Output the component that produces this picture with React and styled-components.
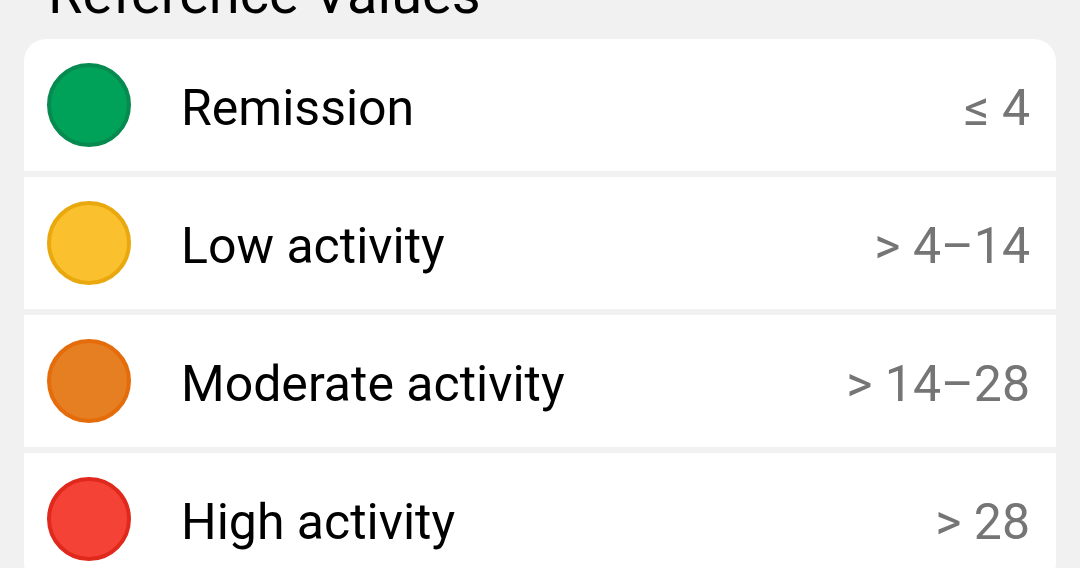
import React from 'react';
import styled, { createGlobalStyle } from 'styled-components';

const GlobalStyle = createGlobalStyle`
  body {
    margin: 0;
    background: #f1f1f1;
    font-family: Roboto, "Noto Sans", sans-serif;
  }
`;

const Page = styled.div`
  padding: 0 24px 24px;
`;

const Heading = styled.h2`
  margin: -34px 0 17px 24px;
  font-size: 56px;
  line-height: 56px;
  font-weight: 400;
  color: #000;
`;

const Card = styled.div`
  display: flex;
  flex-direction: column;
  gap: 6px;
  border-radius: 22px;
  overflow: hidden;
`;

const Row = styled.div`
  display: flex;
  align-items: center;
  height: 132px;
  padding: 0 26px 0 23px;
  background: #fff;
`;

const Dot = styled.span`
  flex: none;
  width: 84px;
  height: 84px;
  box-sizing: border-box;
  border-radius: 50%;
  background: ${(p) => p.$fill};
  border: 4px solid ${(p) => p.$ring};
`;

const Label = styled.span`
  flex: 1;
  margin-left: 50px;
  padding-top: 6px;
  font-size: 50px;
  color: #000;
`;

const Range = styled.span`
  padding-top: 6px;
  font-size: 50px;
  color: #757575;
`;

const levels = [
  { label: 'Remission', range: '≤ 4', fill: '#00a159', ring: '#078a4f' },
  { label: 'Low activity', range: '> 4–14', fill: '#fbc02d', ring: '#e9a90e' },
  { label: 'Moderate activity', range: '> 14–28', fill: '#e67e22', ring: '#e46c0a' },
  { label: 'High activity', range: '> 28', fill: '#f44336', ring: '#e0291c' },
];

export default function App() {
  return (
    <>
      <GlobalStyle />
      <Page>
        <Heading>Reference Values</Heading>
        <Card>
          {levels.map((l) => (
            <Row key={l.label}>
              <Dot $fill={l.fill} $ring={l.ring} />
              <Label>{l.label}</Label>
              <Range>{l.range}</Range>
            </Row>
          ))}
        </Card>
      </Page>
    </>
  );
}
